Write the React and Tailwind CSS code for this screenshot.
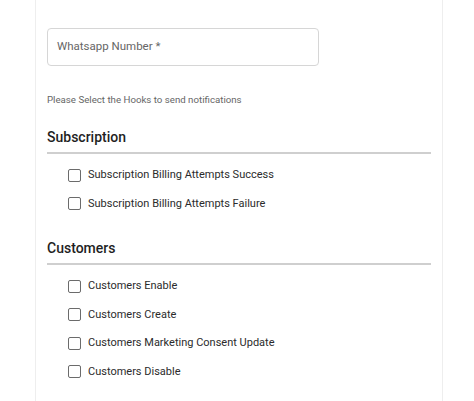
import React from "react";

const font = { fontFamily: "Roboto, 'Noto Sans', sans-serif" };

function Item({ label }) {
  return (
    <div className="flex h-[28.5px] items-center pl-[21px]">
      <span className="box-border h-[13px] w-[13px] rounded-[2px] border-[1.5px] border-[#6b6b6b] bg-white" />
      <span className="ml-[7px] text-[11px] leading-[14px] text-[#2b2b2b]">{label}</span>
    </div>
  );
}

function Section({ title, items }) {
  return (
    <div>
      <div className="h-[20px] text-[14px] font-medium leading-[20px] text-[#1f1f1f]">{title}</div>
      <div className="mt-[5px] h-[2px] bg-[#cfcfcf]" />
      <div className="mt-[7px]">
        {items.map((l) => (
          <Item key={l} label={l} />
        ))}
      </div>
    </div>
  );
}

export default function App() {
  return (
    <div className="h-[401px] w-[474px] overflow-hidden bg-white" style={font}>
      <div className="ml-[35px] h-full w-[408px] border-x border-[#eeeeee] px-[11px] pt-[28px]">
        <div className="flex h-[38px] w-[272px] items-center rounded-[4px] border border-[#d6d6d6] px-[9px]">
          <span className="text-[11.5px] text-[#666666]">Whatsapp Number *</span>
        </div>
        <div className="mt-[27px] h-[14px] text-[9.7px] leading-[14px] text-[#666666]">
          Please Select the Hooks to send notifications
        </div>
        <div className="mt-[20px]">
          <Section
            title="Subscription"
            items={["Subscription Billing Attempts Success", "Subscription Billing Attempts Failure"]}
          />
        </div>
        <div className="mt-[20px]">
          <Section
            title="Customers"
            items={[
              "Customers Enable",
              "Customers Create",
              "Customers Marketing Consent Update",
              "Customers Disable",
            ]}
          />
        </div>
      </div>
    </div>
  );
}
